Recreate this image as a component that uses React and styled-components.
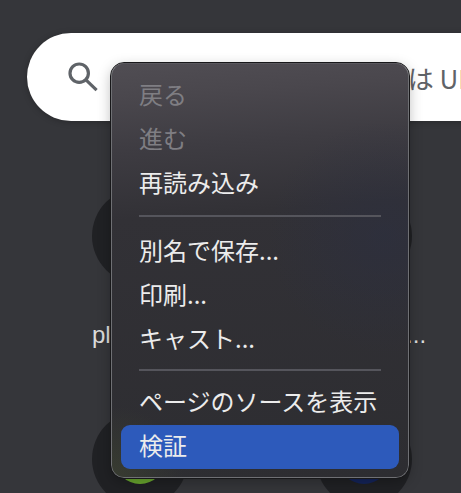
import React from "react";
import styled, { createGlobalStyle } from "styled-components";

const Global = createGlobalStyle`
  html, body { margin: 0; padding: 0; background: #35363a; }
  body { width: 461px; height: 493px; overflow: hidden; font-family: "Liberation Sans", "Noto Sans CJK JP", sans-serif; }
`;

const Page = styled.div`
  position: relative;
  width: 461px;
  height: 493px;
  overflow: hidden;
  padding-top: 33px;
  box-sizing: border-box;
  background: #35363a;
`;

const SearchBar = styled.div`
  display: flex;
  align-items: center;
  width: 720px;
  height: 88px;
  margin-left: 27px;
  padding-left: 40px;
  gap: 87px;
  box-sizing: border-box;
  border-radius: 44px;
  background: #fff;
  box-shadow: 0 1px 6px rgba(0, 0, 0, 0.25);
`;

const SearchText = styled.span`
  font-family: "Noto Sans CJK JP", sans-serif;
  font-size: 26px;
  white-space: nowrap;
  color: #5f6368;
`;

const Tiles = styled.div`
  display: grid;
  grid-template-columns: 124px 124px;
  column-gap: 100px;
  row-gap: 61px;
  margin: 67px 0 0 78px;
`;

const Tile = styled.div`
  display: flex;
  flex-direction: column;
  align-items: center;
  gap: 36px;
`;

const TileCircle = styled.div`
  display: flex;
  align-items: center;
  justify-content: center;
  width: 96px;
  height: 96px;
  border-radius: 50%;
  background: #202124;
`;

const Favicon = styled.div`
  width: 50px;
  height: 50px;
  border-radius: 50%;
  background: ${(p) => p.$color};
`;

const TileLabel = styled.div`
  font-size: 24px;
  line-height: 30px;
  color: #dcdcdc;
  white-space: nowrap;
  text-align: center;
  width: 124px;
`;

const Menu = styled.div`
  position: absolute;
  left: 111px;
  top: 63px;
  width: 298px;
  height: 415px;
  box-sizing: border-box;
  padding: 10px 9px 8px;
  display: flex;
  flex-direction: column;
  border-radius: 13px;
  border: 1px solid #6f7074;
  border-top-color: #5a585e;
  outline: 1px solid #18181a;
  background:
    radial-gradient(circle at 0% 100%, rgba(66, 74, 48, 0.5), rgba(66, 74, 48, 0) 14%),
    radial-gradient(circle at 92% 42%, rgba(42, 46, 66, 0.5), rgba(42, 46, 66, 0) 32%),
    linear-gradient(176deg, #504d53 0%, #4a474d 8%, #3e3c42 20%, #323136 36%, #2d2d31 100%);
  box-shadow: 0 4px 14px rgba(0, 0, 0, 0.28);
`;

const Item = styled.div`
  height: 44px;
  flex: none;
  box-sizing: border-box;
  display: flex;
  align-items: center;
  padding: 0 0 5px 18px;
  border-radius: 9px;
  font-family: "Noto Sans CJK JP", sans-serif;
  font-size: 24px;
  font-weight: 400;
  white-space: nowrap;
  color: ${(p) => (p.$disabled ? "#7f7e83" : "#ececec")};
  background: ${(p) => (p.$active ? "#2d5abb" : "transparent")};
`;

const Separator = styled.div`
  flex: none;
  height: 2px;
  margin: ${(p) => p.$top}px 18px ${(p) => p.$bottom}px;
  background: #55555c;
`;

function SearchIcon() {
  return (
    <svg width="32" height="32" viewBox="0 0 32 32" fill="none" stroke="#5f6368" strokeWidth="3.2">
      <circle cx="12.2" cy="12.2" r="9.2" />
      <path d="M19.2 19.2 L29.6 29.2" />
    </svg>
  );
}

export default function App() {
  return (
    <Page>
      <Global />
      <SearchBar>
        <SearchIcon />
        <SearchText>Google で検索または URL を入力</SearchText>
      </SearchBar>
      <Tiles>
        <Tile>
          <TileCircle />
          <TileLabel>playbook</TileLabel>
        </Tile>
        <Tile>
          <TileCircle />
          <TileLabel>developer...</TileLabel>
        </Tile>
        <Tile>
          <TileCircle>
            <Favicon $color="#6aa82f" />
          </TileCircle>
        </Tile>
        <Tile>
          <TileCircle>
            <Favicon $color="#14245a" />
          </TileCircle>
        </Tile>
      </Tiles>
      <Menu>
        <Item $disabled>戻る</Item>
        <Item $disabled>進む</Item>
        <Item>再読み込み</Item>
        <Separator $top={9} $bottom={13} />
        <Item>別名で保存...</Item>
        <Item>印刷...</Item>
        <Item>キャスト...</Item>
        <Separator $top={7} $bottom={10} />
        <Item>ページのソースを表示</Item>
        <Item $active>検証</Item>
      </Menu>
    </Page>
  );
}
